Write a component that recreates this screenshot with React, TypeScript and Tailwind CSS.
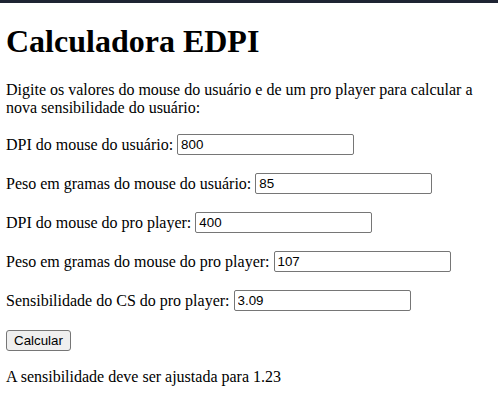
export default function App() {
  const fields = [
    { label: "DPI do mouse do usuário:", value: "800" },
    { label: "Peso em gramas do mouse do usuário:", value: "85" },
    { label: "DPI do mouse do pro player:", value: "400" },
    { label: "Peso em gramas do mouse do pro player:", value: "107" },
    { label: "Sensibilidade do CS do pro player:", value: "3.09" },
  ];

  return (
    <div className="min-h-screen bg-white text-black font-['Liberation_Serif',serif] text-[16px]">
      <div className="h-[3px] bg-[#1e2433]" />
      <div className="px-[6px]">
        <h1 className="mt-[20px] mb-[21px] text-[32px] font-bold leading-[37px]">
          Calculadora EDPI
        </h1>
        <p className="leading-[18px] mb-4">
          Digite os valores do mouse do usuário e de um pro player para calcular a nova
          sensibilidade do usuário:
        </p>
        {fields.map((f) => (
          <p key={f.label} className="mb-4 flex items-center h-[23px]">
            <span>{f.label}</span>
            <input
              type="text"
              defaultValue={f.value}
              className="ml-[4px] w-[177px] h-[21px] rounded-[2px] border border-[#767676] px-[3px] font-['Liberation_Sans',Arial,sans-serif] text-[13.33px] text-black outline-none"
            />
          </p>
        ))}
        <button className="h-[21px] rounded-[3px] border border-[#767676] bg-[#efefef] px-[7px] font-['Liberation_Sans',Arial,sans-serif] text-[13.33px] leading-none">
          Calcular
        </button>
        <p className="mt-4 leading-[18px]">A sensibilidade deve ser ajustada para 1.23</p>
      </div>
    </div>
  );
}
